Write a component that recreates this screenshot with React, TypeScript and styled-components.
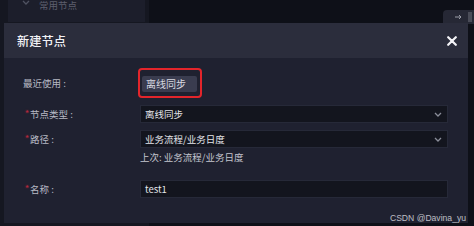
import { FunctionComponent } from 'react'
import { createGlobalStyle, styled } from 'styled-components'

const FONT = `'Noto Sans CJK SC', 'Noto Sans', sans-serif`

const GlobalStyle = createGlobalStyle`
  html, body {
    margin: 0;
    padding: 0;
    background: #0e1018;
    font-family: ${FONT};
  }
`

const Screen = styled.div`
  position: relative;
  width: 474px;
  height: 226px;
  overflow: hidden;
  display: flex;
  background: #0e1018;
`

// background app behind the modal
const SideBar = styled.div`
  width: 149px;
  height: 100%;
  background: #151721;
  padding-left: 8px;
  box-sizing: border-box;
  display: flex;
`

const SidePanel = styled.div`
  width: 137px;
  height: 22px;
  background: #1c1e2b;
  display: flex;
  align-items: flex-start;
  gap: 9px;
  padding: 0 0 0 14px;
  box-sizing: border-box;
  color: #5c5f6d;
  font-size: 9.5px;
  line-height: 11px;
`

const MainArea = styled.div`
  flex: 1;
  display: flex;
  justify-content: flex-end;
  padding-top: 10px;
`

const ToolTab = styled.div`
  width: 31px;
  height: 14px;
  background: #262835;
  border-radius: 4px 0 0 0;
  display: flex;
  align-items: center;
  justify-content: flex-end;
  gap: 5px;
  padding-right: 2px;
  box-sizing: border-box;
  color: #8d909c;
`

const Modal = styled.div`
  position: absolute;
  left: 4px;
  top: 23px;
  width: 464px;
  height: 200px;
  background: #1f2130;
  display: flex;
  flex-direction: column;
`

const Header = styled.div`
  height: 35px;
  background: #2b2d3c;
  display: flex;
  align-items: center;
  justify-content: space-between;
  padding: 0 11px 0 13px;
  flex-shrink: 0;
`

const Title = styled.div`
  color: #f2f2f6;
  font-size: 12.2px;
  font-weight: 500;
  letter-spacing: 0.1px;
`

const Body = styled.div`
  display: flex;
  flex-direction: column;
  padding: 10px 20px 0 19px;
`

const Row = styled.div<{ $gap?: number }>`
  display: flex;
  align-items: center;
  margin-top: ${(p) => p.$gap ?? 0}px;
`

const Label = styled.div`
  width: 117px;
  flex-shrink: 0;
  display: flex;
  align-items: center;
  color: #b7b9c4;
  font-size: 9.5px;
  line-height: 12px;
  white-space: pre;
`

const Star = styled.span`
  color: #b3283c;
  font-size: 9px;
  width: 7px;
  padding-left: 2px;
  box-sizing: border-box;
  text-shadow: 0 0 2px rgba(200, 40, 60, 0.6);
`

const Highlight = styled.div`
  border: 2px solid #e3252b;
  border-radius: 4px;
  padding: 6px 3px 4px 2px;
  margin-left: -2px;
`

const Tag = styled.div`
  width: 55px;
  height: 16px;
  background: #3a3c4f;
  border-radius: 2px;
  color: #d9dae2;
  font-size: 10px;
  line-height: 16px;
  padding-left: 4px;
  box-sizing: border-box;
`

const Field = styled.div`
  flex: 1;
  height: 18px;
  background: #13151e;
  border: 1px solid #262938;
  box-sizing: border-box;
  display: flex;
  align-items: center;
  justify-content: space-between;
  padding: 0 5px 0 4px;
  color: #e4e5ea;
  font-size: 9.5px;
`

const Hint = styled.div`
  margin: 3px 0 0 117px;
  color: #c4c6cf;
  font-size: 9.5px;
  line-height: 13px;
`

const Watermark = styled.div`
  position: absolute;
  right: 8px;
  bottom: 3px;
  font-family: 'Liberation Sans', Arial, sans-serif;
  font-size: 8.6px;
  color: rgba(235, 236, 242, 0.78);
`

const Chevron: FunctionComponent<{ color?: string }> = ({ color = '#8a8d99' }) => (
  <svg width="8" height="5" viewBox="0 0 8 5">
    <path d="M1 1 L4 4 L7 1" fill="none" stroke={color} strokeWidth="1.3" />
  </svg>
)

const CloseIcon = () => (
  <svg width="10" height="10" viewBox="0 0 10 10">
    <path d="M1.2 1.2 L8.8 8.8 M8.8 1.2 L1.2 8.8" stroke="#f4f4f8" strokeWidth="2.2" strokeLinecap="round" />
  </svg>
)

export default function App() {
  return (
    <>
      <GlobalStyle />
      <Screen>
        <SideBar>
          <SidePanel>
            <Chevron color="#4f5261" />
            <span>常用节点</span>
          </SidePanel>
        </SideBar>
        <MainArea>
          <ToolTab>
            <svg width="8" height="6" viewBox="0 0 8 6">
              <path d="M0 3 H6 M4 1 L6 3 L4 5" fill="none" stroke="#9a9da8" strokeWidth="1" />
            </svg>
            <svg width="4" height="10" viewBox="0 0 4 10">
              <path d="M1 0 V10 M3 0 V10" stroke="#6e717c" strokeWidth="1" />
            </svg>
          </ToolTab>
        </MainArea>

        <Modal>
          <Header>
            <Title>新建节点</Title>
            <CloseIcon />
          </Header>
          <Body>
            <Row>
              <Label>最近使用 :</Label>
              <Highlight>
                <Tag>离线同步</Tag>
              </Highlight>
            </Row>
            <Row $gap={7}>
              <Label>
                <Star>*</Star>节点类型 :
              </Label>
              <Field>
                <span>离线同步</span>
                <Chevron />
              </Field>
            </Row>
            <Row $gap={7}>
              <Label>
                <Star>*</Star>路径 :
              </Label>
              <Field>
                <span>业务流程/业务日度</span>
                <Chevron />
              </Field>
            </Row>
            <Hint>上次: 业务流程/业务日度</Hint>
            <Row $gap={16}>
              <Label>
                <Star>*</Star>名称 :
              </Label>
              <Field>
                <span>test1</span>
              </Field>
            </Row>
          </Body>
        </Modal>
        <Watermark>CSDN @Davina_yu</Watermark>
      </Screen>
    </>
  )
}
